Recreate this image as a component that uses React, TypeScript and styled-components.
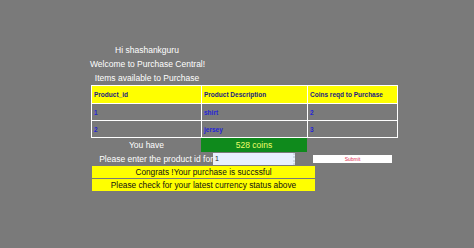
import { Fragment } from 'react';
import styled, { createGlobalStyle } from 'styled-components';

const GlobalStyle = createGlobalStyle`
  html, body {
    margin: 0;
    padding: 0;
    background: #7a7a7a;
    font-family: "Liberation Sans", Arial, sans-serif;
  }
`;

const Page = styled.div`
  width: 474px;
  height: 248px;
  padding: 43px 0 0 91px;
  box-sizing: border-box;
  display: flex;
  flex-direction: column;
`;

const Intro = styled.div`
  width: 114px;
  margin-left: -1px;
  text-align: center;
  color: #ffffff;
  font-size: 8.5px;
  line-height: 14px;
  white-space: nowrap;
`;

const Grid = styled.div`
  display: grid;
  grid-template-columns: 109px 105px 89px;
  grid-auto-rows: 16px;
  grid-template-rows: 17px;
  gap: 1px;
  padding: 1px;
  background: #ffffff;
  width: max-content;
`;

const Cell = styled.div<{ $head?: boolean }>`
  display: flex;
  align-items: center;
  padding-left: 2px;
  background: ${(p) => (p.$head ? '#ffff00' : '#7a7a7a')};
  color: ${(p) => (p.$head ? '#1c1c80' : '#2424d8')};
  font-size: 6.5px;
  font-weight: bold;
  white-space: nowrap;
`;

const CoinsRow = styled.div`
  display: flex;
  height: 14px;
  margin-left: 1px;
`;

const CoinsLabel = styled.div`
  width: 109px;
  text-align: center;
  color: #ffffff;
  font-size: 8.5px;
  line-height: 14px;
`;

const CoinsBox = styled.div`
  width: 106px;
  background: #0f8a1c;
  color: #f0ff6a;
  font-size: 8.5px;
  line-height: 14px;
  text-align: center;
`;

const FormRow = styled.form`
  display: flex;
  align-items: center;
  height: 13px;
  margin: 0;
`;

const FormLabel = styled.label`
  width: 122px;
  text-align: right;
  color: #ffffff;
  font-size: 8.5px;
  white-space: nowrap;
`;

const Input = styled.input`
  width: 82px;
  height: 12px;
  box-sizing: border-box;
  border: none;
  border-right: 2px dotted #cfd8e6;
  background: #e8f0fe;
  padding: 0 2px;
  font-size: 7px;
  font-family: inherit;
  color: #222;
  outline: none;
`;

const SubmitButton = styled.button`
  margin-left: 18px;
  width: 79px;
  height: 8px;
  padding: 0;
  border: none;
  background: #ffffff;
  color: #e0284a;
  font-size: 5px;
  font-family: inherit;
  line-height: 8px;
`;

const Notice = styled.div`
  width: 223px;
  height: 12px;
  margin: 1px 0 0 1px;
  background: #ffff00;
  color: #111111;
  font-size: 8.3px;
  line-height: 12px;
  text-align: center;
  white-space: nowrap;
`;

const products = [
  { id: '1', desc: 'shirt', coins: '2' },
  { id: '2', desc: 'jersey', coins: '3' },
];

export default function App() {
  return (
    <>
      <GlobalStyle />
      <Page>
        <Intro>
          <div>Hi shashankguru</div>
          <div>Welcome to Purchase Central!</div>
          <div>Items available to Purchase</div>
        </Intro>
        <Grid>
          <Cell $head>Product_id</Cell>
          <Cell $head>Product Description</Cell>
          <Cell $head>Coins reqd to Purchase</Cell>
          {products.map((p) => (
            <Fragment key={p.id}>
              <Cell>{p.id}</Cell>
              <Cell>{p.desc}</Cell>
              <Cell>{p.coins}</Cell>
            </Fragment>
          ))}
        </Grid>
        <CoinsRow>
          <CoinsLabel>You have</CoinsLabel>
          <CoinsBox>528 coins</CoinsBox>
        </CoinsRow>
        <FormRow onSubmit={(e) => e.preventDefault()}>
          <FormLabel>Please enter the product id for</FormLabel>
          <Input defaultValue="1" />
          <SubmitButton type="submit">Submit</SubmitButton>
        </FormRow>
        <Notice>Congrats !Your purchase is succssful</Notice>
        <Notice>Please check for your latest currency status above</Notice>
      </Page>
    </>
  );
}
